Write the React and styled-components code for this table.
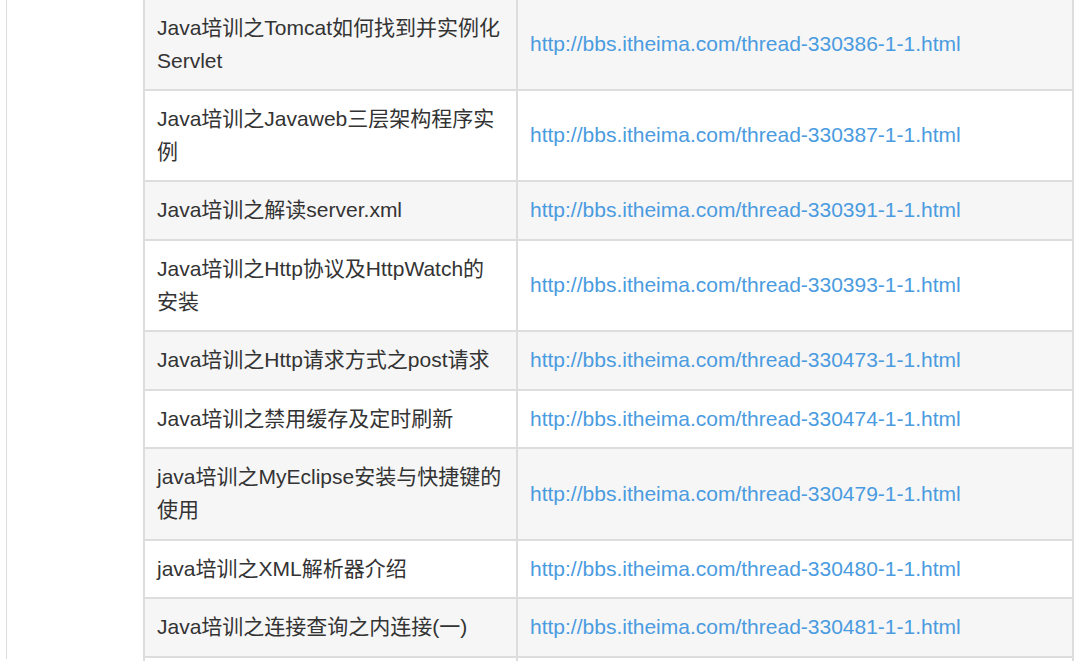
import styled, { createGlobalStyle } from 'styled-components';

const GlobalStyle = createGlobalStyle`
  html, body {
    margin: 0;
    padding: 0;
    background: #fff;
    overflow: hidden;
  }
  body {
    font-family: "Liberation Sans", "Noto Sans CJK SC", sans-serif;
    color: #333;
  }
`;

const Page = styled.div`
  height: 661px;
  padding-left: 6px;
  overflow: hidden;
`;

const Panel = styled.div`
  height: 100%;
  border-left: 1px solid #ddd;
  padding-left: 136px;
`;

const Table = styled.table`
  width: 931px;
  margin-top: -2px;
  border-collapse: collapse;
  table-layout: fixed;
  font-size: 21px;
  line-height: 32.6px;
`;

const Row = styled.tr`
  background: ${(p) => (p.$odd ? '#f6f6f6' : '#fff')};
`;

const Cell = styled.td`
  border: 2px solid #ddd;
  padding: 12px;
  vertical-align: middle;
`;

const TitleCell = styled(Cell)`
  width: 347px;
`;

const LinkCell = styled(Cell)`
  white-space: nowrap;
`;

const Link = styled.a`
  color: #4a9be0;
  text-decoration: none;
`;

const rows = [
  ['Java培训之Tomcat如何找到并实例化Servlet', '330386'],
  ['Java培训之Javaweb三层架构程序实例', '330387'],
  ['Java培训之解读server.xml', '330391'],
  ['Java培训之Http协议及HttpWatch的安装', '330393'],
  ['Java培训之Http请求方式之post请求', '330473'],
  ['Java培训之禁用缓存及定时刷新', '330474'],
  ['java培训之MyEclipse安装与快捷键的使用', '330479'],
  ['java培训之XML解析器介绍', '330480'],
  ['Java培训之连接查询之内连接(一)', '330481'],
  ['Java培训之连接查询之外连接(二)', '330482'],
];

const App = () => (
  <>
    <GlobalStyle />
    <Page>
      <Panel>
        <Table>
          <tbody>
            {rows.map(([title, id], i) => {
              const url = `http://bbs.itheima.com/thread-${id}-1-1.html`;
              return (
                <Row key={id} $odd={i % 2 === 0}>
                  <TitleCell>{title}</TitleCell>
                  <LinkCell>
                    <Link href={url}>{url}</Link>
                  </LinkCell>
                </Row>
              );
            })}
          </tbody>
        </Table>
      </Panel>
    </Page>
  </>
);

export default App;
